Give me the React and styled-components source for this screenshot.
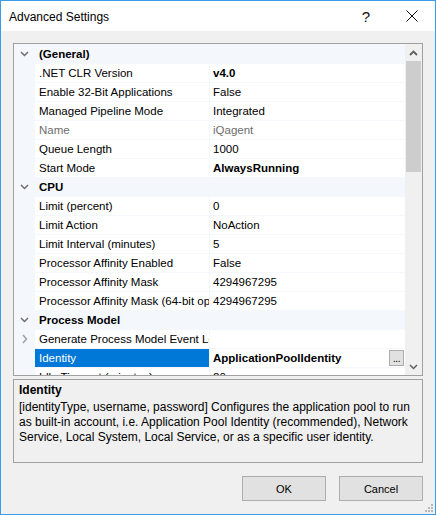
import React from "react";
import styled, { createGlobalStyle } from "styled-components";

const GlobalStyle = createGlobalStyle`
  html, body {
    margin: 0;
    padding: 0;
    background: #ffffff;
  }
  body {
    font-family: "Liberation Sans", Arial, sans-serif;
    font-size: 11.5px;
    color: #000;
  }
  * {
    box-sizing: border-box;
  }
`;

const LINE = "#f4f7fc";

const Window = styled.div`
  position: relative;
  width: 436px;
  height: 515px;
  border: 1px solid #3c9be6;
  background: #f0f0f0;
  display: flex;
  flex-direction: column;
  overflow: hidden;
`;

const TitleBar = styled.div`
  height: 30px;
  flex: none;
  background: #ffffff;
  display: flex;
  align-items: center;
  padding: 0 0 0 8px;
`;

const Title = styled.div`
  flex: 1;
  font-size: 12px;
  padding-top: 1px;
`;

const TitleButton = styled.div`
  width: 46px;
  height: 30px;
  display: flex;
  align-items: center;
  justify-content: center;
  font-size: 15px;
  font-weight: 300;
  color: #111;
`;

const Body = styled.div`
  flex: 1;
  padding: 12px 12px 0 12px;
  display: flex;
  flex-direction: column;
`;

const Grid = styled.div`
  height: 333px;
  border: 1px solid #a0a0a0;
  background: #ffffff;
  display: flex;
  flex: none;
`;

const Rows = styled.div`
  flex: 1;
  overflow: hidden;
  border-top: 1px solid ${LINE};
  background: #ffffff;
`;

const Row = styled.div`
  display: grid;
  grid-template-columns: 21px 175px 1fr;
  height: 19px;
  border-bottom: 1px solid ${LINE};
`;

const Gutter = styled.div`
  background: ${LINE};
  display: flex;
  align-items: center;
  justify-content: center;
`;

const NameCell = styled.div`
  padding-left: 4px;
  border-right: 1px solid ${LINE};
  white-space: nowrap;
  overflow: hidden;
  line-height: 18px;
  background: ${(p) => (p.$selected ? "#0078d7" : "#ffffff")};
  color: ${(p) => (p.$selected ? "#ffffff" : p.$disabled ? "#6d6d6d" : "#000")};
`;

const ValueCell = styled.div`
  padding-left: 3px;
  padding-right: 1px;
  display: flex;
  align-items: center;
  justify-content: space-between;
  white-space: nowrap;
  overflow: hidden;
  line-height: 18px;
  font-weight: ${(p) => (p.$bold ? 700 : 400)};
  color: ${(p) => (p.$disabled ? "#6d6d6d" : "#000")};
`;

const CategoryRow = styled.div`
  display: grid;
  grid-template-columns: 21px 1fr;
  height: 19px;
  background: ${LINE};
  border-bottom: 1px solid ${LINE};
`;

const CategoryName = styled.div`
  padding-left: 4px;
  font-weight: 700;
  line-height: 18px;
`;

const EllipsisButton = styled.div`
  width: 15px;
  height: 16px;
  border: 1px solid #adadad;
  background: #e1e1e1;
  font-size: 10px;
  font-weight: 400;
  line-height: 16px;
  text-align: center;
  letter-spacing: -0.5px;
  color: #000;
`;

const ScrollBar = styled.div`
  width: 17px;
  flex: none;
  background: #f0f0f0;
  display: flex;
  flex-direction: column;
  align-items: center;
`;

const ArrowBox = styled.div`
  width: 17px;
  height: 17px;
  flex: none;
  display: flex;
  align-items: center;
  justify-content: center;
`;

const Track = styled.div`
  flex: 1;
  width: 17px;
  display: flex;
  flex-direction: column;
  align-items: center;
`;

const Thumb = styled.div`
  width: 15px;
  height: 111px;
  background: #cdcdcd;
`;

const Description = styled.div`
  height: 84px;
  margin-top: 3px;
  border: 1px solid #a0a0a0;
  padding: 3px 6px 0 5px;
  font-size: 12px;
  line-height: 15px;
  flex: none;
`;

const DescTitle = styled.div`
  font-weight: 700;
  margin-bottom: 2px;
`;

const DescLine = styled.div`
  white-space: nowrap;
`;

const Footer = styled.div`
  display: flex;
  justify-content: flex-end;
  gap: 13px;
  margin-top: 13px;
`;

const Button = styled.div`
  width: 84px;
  height: 25px;
  border: 1px solid #adadad;
  background: #e1e1e1;
  display: flex;
  align-items: center;
  justify-content: center;
  font-size: 11px;
`;

const Grip = styled.svg`
  position: absolute;
  right: 2px;
  bottom: 2px;
`;

const ChevronDown = ({ color = "#6e6e6e" }) => (
  <svg width="9" height="6" viewBox="0 0 9 6">
    <path d="M1 1 L4.5 4.5 L8 1" fill="none" stroke={color} strokeWidth="1.5" />
  </svg>
);

const ChevronRight = () => (
  <svg width="6" height="10" viewBox="0 0 6 10">
    <path d="M1 1 L4.5 5 L1 9" fill="none" stroke="#a0a0a0" strokeWidth="1.5" />
  </svg>
);

const ChevronUp = () => (
  <svg width="9" height="6" viewBox="0 0 9 6">
    <path d="M1 5 L4.5 1.5 L8 5" fill="none" stroke="#606060" strokeWidth="1.8" />
  </svg>
);

const CloseIcon = () => (
  <svg width="12" height="12" viewBox="0 0 12 12">
    <path d="M0.5 0.5 L11.5 11.5 M11.5 0.5 L0.5 11.5" stroke="#111" strokeWidth="1" />
  </svg>
);

const categories = [
  {
    name: "(General)",
    items: [
      { name: ".NET CLR Version", value: "v4.0", bold: true },
      { name: "Enable 32-Bit Applications", value: "False" },
      { name: "Managed Pipeline Mode", value: "Integrated" },
      { name: "Name", value: "iQagent", disabled: true },
      { name: "Queue Length", value: "1000" },
      { name: "Start Mode", value: "AlwaysRunning", bold: true },
    ],
  },
  {
    name: "CPU",
    items: [
      { name: "Limit (percent)", value: "0" },
      { name: "Limit Action", value: "NoAction" },
      { name: "Limit Interval (minutes)", value: "5" },
      { name: "Processor Affinity Enabled", value: "False" },
      { name: "Processor Affinity Mask", value: "4294967295" },
      { name: "Processor Affinity Mask (64-bit option)", value: "4294967295" },
    ],
  },
  {
    name: "Process Model",
    items: [
      { name: "Generate Process Model Event Log Entry", value: "", expandable: true },
      { name: "Identity", value: "ApplicationPoolIdentity", bold: true, selected: true, editor: true },
      { name: "Idle Timeout (minutes)", value: "20" },
    ],
  },
];

const App = () => {
  return (
    <>
      <GlobalStyle />
      <Window>
        <TitleBar>
          <Title>Advanced Settings</Title>
          <TitleButton>?</TitleButton>
          <TitleButton>
            <CloseIcon />
          </TitleButton>
        </TitleBar>
        <Body>
          <Grid>
            <Rows>
              {categories.map((cat) => (
                <React.Fragment key={cat.name}>
                  <CategoryRow>
                    <Gutter>
                      <ChevronDown />
                    </Gutter>
                    <CategoryName>{cat.name}</CategoryName>
                  </CategoryRow>
                  {cat.items.map((item) => (
                    <Row key={item.name}>
                      <Gutter>{item.expandable ? <ChevronRight /> : null}</Gutter>
                      <NameCell $selected={item.selected} $disabled={item.disabled}>
                        {item.name}
                      </NameCell>
                      <ValueCell $bold={item.bold} $disabled={item.disabled}>
                        <span>{item.value}</span>
                        {item.editor ? <EllipsisButton>...</EllipsisButton> : null}
                      </ValueCell>
                    </Row>
                  ))}
                </React.Fragment>
              ))}
            </Rows>
            <ScrollBar>
              <ArrowBox>
                <ChevronUp />
              </ArrowBox>
              <Track>
                <Thumb />
              </Track>
              <ArrowBox>
                <ChevronDown color="#606060" />
              </ArrowBox>
            </ScrollBar>
          </Grid>
          <Description>
            <DescTitle>Identity</DescTitle>
            <DescLine>
              [identityType, username, password] Configures the application pool to run
            </DescLine>
            <DescLine>
              as built-in account, i.e. Application Pool Identity (recommended), Network
            </DescLine>
            <DescLine>
              Service, Local System, Local Service, or as a specific user identity.
            </DescLine>
          </Description>
          <Footer>
            <Button>OK</Button>
            <Button>Cancel</Button>
          </Footer>
        </Body>
        <Grip width="8" height="8" viewBox="0 0 8 8">
          <rect x="6" y="0" width="2" height="2" fill="#b8b8b8" />
          <rect x="3" y="3" width="2" height="2" fill="#b8b8b8" />
          <rect x="6" y="3" width="2" height="2" fill="#b8b8b8" />
          <rect x="0" y="6" width="2" height="2" fill="#b8b8b8" />
          <rect x="3" y="6" width="2" height="2" fill="#b8b8b8" />
          <rect x="6" y="6" width="2" height="2" fill="#b8b8b8" />
        </Grip>
      </Window>
    </>
  );
};

export default App;
